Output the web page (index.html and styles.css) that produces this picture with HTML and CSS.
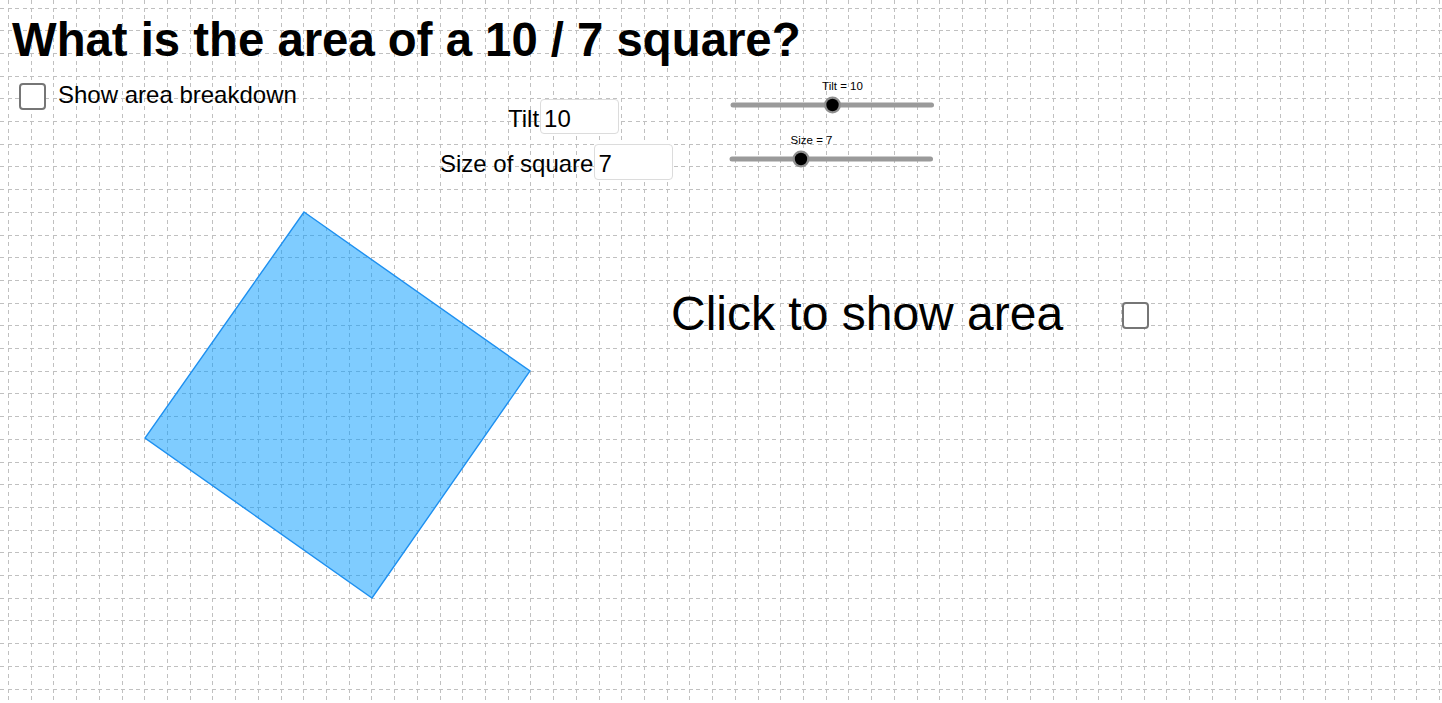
FILE: index.html
```html
<!DOCTYPE html>
<html lang="en">
<head>
<meta charset="utf-8">
<title>What is the area of a 10 / 7 square?</title>
<link rel="stylesheet" href="styles.css">
</head>
<body>
<div class="applet">
  <svg class="canvas" width="1442" height="703" viewBox="0 0 1442 703" xmlns="http://www.w3.org/2000/svg">
    <g class="grid vgrid">
      <line x1="8.5" y1="0" x2="8.5" y2="703"/>
      <line x1="31.5" y1="0" x2="31.5" y2="703"/>
      <line x1="53.5" y1="0" x2="53.5" y2="703"/>
      <line x1="76.5" y1="0" x2="76.5" y2="703"/>
      <line x1="99.5" y1="0" x2="99.5" y2="703"/>
      <line x1="122.5" y1="0" x2="122.5" y2="703"/>
      <line x1="144.5" y1="0" x2="144.5" y2="703"/>
      <line x1="167.5" y1="0" x2="167.5" y2="703"/>
      <line x1="190.5" y1="0" x2="190.5" y2="703"/>
      <line x1="212.5" y1="0" x2="212.5" y2="703"/>
      <line x1="235.5" y1="0" x2="235.5" y2="703"/>
      <line x1="258.5" y1="0" x2="258.5" y2="703"/>
      <line x1="281.5" y1="0" x2="281.5" y2="703"/>
      <line x1="303.5" y1="0" x2="303.5" y2="703"/>
      <line x1="326.5" y1="0" x2="326.5" y2="703"/>
      <line x1="349.5" y1="0" x2="349.5" y2="703"/>
      <line x1="371.5" y1="0" x2="371.5" y2="703"/>
      <line x1="394.5" y1="0" x2="394.5" y2="703"/>
      <line x1="417.5" y1="0" x2="417.5" y2="703"/>
      <line x1="440.5" y1="0" x2="440.5" y2="703"/>
      <line x1="462.5" y1="0" x2="462.5" y2="703"/>
      <line x1="485.5" y1="0" x2="485.5" y2="703"/>
      <line x1="508.5" y1="0" x2="508.5" y2="703"/>
      <line x1="530.5" y1="0" x2="530.5" y2="703"/>
      <line x1="553.5" y1="0" x2="553.5" y2="703"/>
      <line x1="576.5" y1="0" x2="576.5" y2="703"/>
      <line x1="599.5" y1="0" x2="599.5" y2="703"/>
      <line x1="621.5" y1="0" x2="621.5" y2="703"/>
      <line x1="644.5" y1="0" x2="644.5" y2="703"/>
      <line x1="667.5" y1="0" x2="667.5" y2="703"/>
      <line x1="689.5" y1="0" x2="689.5" y2="703"/>
      <line x1="712.5" y1="0" x2="712.5" y2="703"/>
      <line x1="735.5" y1="0" x2="735.5" y2="703"/>
      <line x1="758.5" y1="0" x2="758.5" y2="703"/>
      <line x1="780.5" y1="0" x2="780.5" y2="703"/>
      <line x1="803.5" y1="0" x2="803.5" y2="703"/>
      <line x1="826.5" y1="0" x2="826.5" y2="703"/>
      <line x1="848.5" y1="0" x2="848.5" y2="703"/>
      <line x1="871.5" y1="0" x2="871.5" y2="703"/>
      <line x1="894.5" y1="0" x2="894.5" y2="703"/>
      <line x1="917.5" y1="0" x2="917.5" y2="703"/>
      <line x1="939.5" y1="0" x2="939.5" y2="703"/>
      <line x1="962.5" y1="0" x2="962.5" y2="703"/>
      <line x1="985.5" y1="0" x2="985.5" y2="703"/>
      <line x1="1007.5" y1="0" x2="1007.5" y2="703"/>
      <line x1="1030.5" y1="0" x2="1030.5" y2="703"/>
      <line x1="1053.5" y1="0" x2="1053.5" y2="703"/>
      <line x1="1076.5" y1="0" x2="1076.5" y2="703"/>
      <line x1="1098.5" y1="0" x2="1098.5" y2="703"/>
      <line x1="1121.5" y1="0" x2="1121.5" y2="703"/>
      <line x1="1144.5" y1="0" x2="1144.5" y2="703"/>
      <line x1="1166.5" y1="0" x2="1166.5" y2="703"/>
      <line x1="1189.5" y1="0" x2="1189.5" y2="703"/>
      <line x1="1212.5" y1="0" x2="1212.5" y2="703"/>
      <line x1="1235.5" y1="0" x2="1235.5" y2="703"/>
      <line x1="1257.5" y1="0" x2="1257.5" y2="703"/>
      <line x1="1280.5" y1="0" x2="1280.5" y2="703"/>
      <line x1="1303.5" y1="0" x2="1303.5" y2="703"/>
      <line x1="1325.5" y1="0" x2="1325.5" y2="703"/>
      <line x1="1348.5" y1="0" x2="1348.5" y2="703"/>
      <line x1="1371.5" y1="0" x2="1371.5" y2="703"/>
      <line x1="1394.5" y1="0" x2="1394.5" y2="703"/>
      <line x1="1416.5" y1="0" x2="1416.5" y2="703"/>
      <line x1="1439.5" y1="0" x2="1439.5" y2="703"/>
    </g>
    <g class="grid hgrid">
      <line x1="0" y1="8.5" x2="1442" y2="8.5"/>
      <line x1="0" y1="30.5" x2="1442" y2="30.5"/>
      <line x1="0" y1="53.5" x2="1442" y2="53.5"/>
      <line x1="0" y1="76.5" x2="1442" y2="76.5"/>
      <line x1="0" y1="98.5" x2="1442" y2="98.5"/>
      <line x1="0" y1="121.5" x2="1442" y2="121.5"/>
      <line x1="0" y1="144.5" x2="1442" y2="144.5"/>
      <line x1="0" y1="166.5" x2="1442" y2="166.5"/>
      <line x1="0" y1="189.5" x2="1442" y2="189.5"/>
      <line x1="0" y1="212.5" x2="1442" y2="212.5"/>
      <line x1="0" y1="235.5" x2="1442" y2="235.5"/>
      <line x1="0" y1="257.5" x2="1442" y2="257.5"/>
      <line x1="0" y1="280.5" x2="1442" y2="280.5"/>
      <line x1="0" y1="303.5" x2="1442" y2="303.5"/>
      <line x1="0" y1="325.5" x2="1442" y2="325.5"/>
      <line x1="0" y1="348.5" x2="1442" y2="348.5"/>
      <line x1="0" y1="371.5" x2="1442" y2="371.5"/>
      <line x1="0" y1="393.5" x2="1442" y2="393.5"/>
      <line x1="0" y1="416.5" x2="1442" y2="416.5"/>
      <line x1="0" y1="439.5" x2="1442" y2="439.5"/>
      <line x1="0" y1="462.5" x2="1442" y2="462.5"/>
      <line x1="0" y1="484.5" x2="1442" y2="484.5"/>
      <line x1="0" y1="507.5" x2="1442" y2="507.5"/>
      <line x1="0" y1="530.5" x2="1442" y2="530.5"/>
      <line x1="0" y1="552.5" x2="1442" y2="552.5"/>
      <line x1="0" y1="575.5" x2="1442" y2="575.5"/>
      <line x1="0" y1="598.5" x2="1442" y2="598.5"/>
      <line x1="0" y1="620.5" x2="1442" y2="620.5"/>
      <line x1="0" y1="643.5" x2="1442" y2="643.5"/>
      <line x1="0" y1="666.5" x2="1442" y2="666.5"/>
      <line x1="0" y1="689.5" x2="1442" y2="689.5"/>
    </g>

    <polygon class="square" points="304,212 530,371 372,598 145,438"/>

    <g class="slider">
      <line x1="733" y1="105" x2="931.5" y2="105" class="track"/>
      <circle cx="832.5" cy="105" r="8.5" class="halo"/>
      <circle cx="832.5" cy="105" r="6.2" class="knob"/>
      <text x="842.5" y="89.5" class="slabel">Tilt = 10</text>
    </g>
    <g class="slider">
      <line x1="732" y1="159" x2="930.5" y2="159" class="track"/>
      <circle cx="801" cy="159" r="8.5" class="halo"/>
      <circle cx="801" cy="159" r="6.2" class="knob"/>
      <text x="811.5" y="143.5" class="slabel">Size = 7</text>
    </g>
  </svg>

  <h1 class="title">What is the area of a 10 / 7 square?</h1>

  <label class="check-row breakdown">
    <span class="box"></span>
    <span class="check-text">Show area breakdown</span>
  </label>

  <div class="field tilt">
    <span class="field-label">Tilt</span>
    <span class="field-input">10</span>
  </div>

  <div class="field size">
    <span class="field-label">Size of square</span>
    <span class="field-input size-input">7</span>
  </div>

  <div class="show-area">
    <span class="big-text">Click to show area</span>
    <span class="box"></span>
  </div>
</div>
</body>
</html>
```

FILE: styles.css
```css
html, body {
  margin: 0;
  padding: 0;
  background: #ffffff;
}

body {
  font-family: "Liberation Sans", Arial, sans-serif;
  color: #000000;
  width: 1442px;
  height: 703px;
  overflow: hidden;
}

.applet {
  position: relative;
  width: 1442px;
  height: 703px;
}

.canvas {
  position: absolute;
  left: 0;
  top: 0;
  display: block;
}

.grid line {
  stroke: #c0c0c0;
  stroke-width: 1;
  stroke-dasharray: 4 3.57;
  shape-rendering: crispEdges;
  fill: none;
}

.square {
  fill: rgba(0, 153, 255, 0.5);
  stroke: #1e90f0;
  stroke-width: 1.4;
  stroke-linejoin: miter;
}

.track {
  stroke: #9a9a9a;
  stroke-width: 5;
  stroke-linecap: round;
}

.halo {
  fill: #8f8f8f;
}

.knob {
  fill: #000000;
}

.slabel {
  font-family: "Liberation Sans", Arial, sans-serif;
  font-size: 11.5px;
  text-anchor: middle;
  fill: #000000;
}

.title {
  position: absolute;
  left: 12px;
  top: 16px;
  margin: 0;
  font-size: 47.3px;
  line-height: 47.3px;
  font-weight: bold;
  white-space: nowrap;
}

.box {
  display: block;
  box-sizing: border-box;
  width: 27px;
  height: 27px;
  border: 2px solid #767676;
  border-radius: 4px;
  background: #ffffff;
  flex: none;
}

.check-row {
  position: absolute;
  display: flex;
  align-items: flex-start;
  gap: 12px;
}

.breakdown {
  left: 19px;
  top: 83px;
}

.check-text {
  font-size: 24px;
  line-height: 24px;
  margin-top: 0;
  white-space: nowrap;
}

.field {
  position: absolute;
  display: flex;
  align-items: flex-start;
  gap: 1px;
}

.tilt {
  left: 508px;
  top: 99px;
}

.size {
  left: 440px;
  top: 144px;
}

.field-label {
  font-size: 24px;
  line-height: 24px;
  margin-top: 8px;
  white-space: nowrap;
}

.field-input {
  display: block;
  box-sizing: border-box;
  width: 79px;
  height: 35px;
  padding: 4px 3px 0 3px;
  border: 1px solid #dcdcdc;
  border-radius: 4px;
  background: #ffffff;
  font-size: 24px;
  line-height: 30px;
}

.size-input {
  height: 36px;
}

.show-area {
  position: absolute;
  left: 671px;
  top: 290px;
  display: flex;
  align-items: flex-start;
  gap: 59px;
}

.big-text {
  font-size: 48px;
  line-height: 48px;
  white-space: nowrap;
}

.show-area .box {
  margin-top: 12px;
}
```
